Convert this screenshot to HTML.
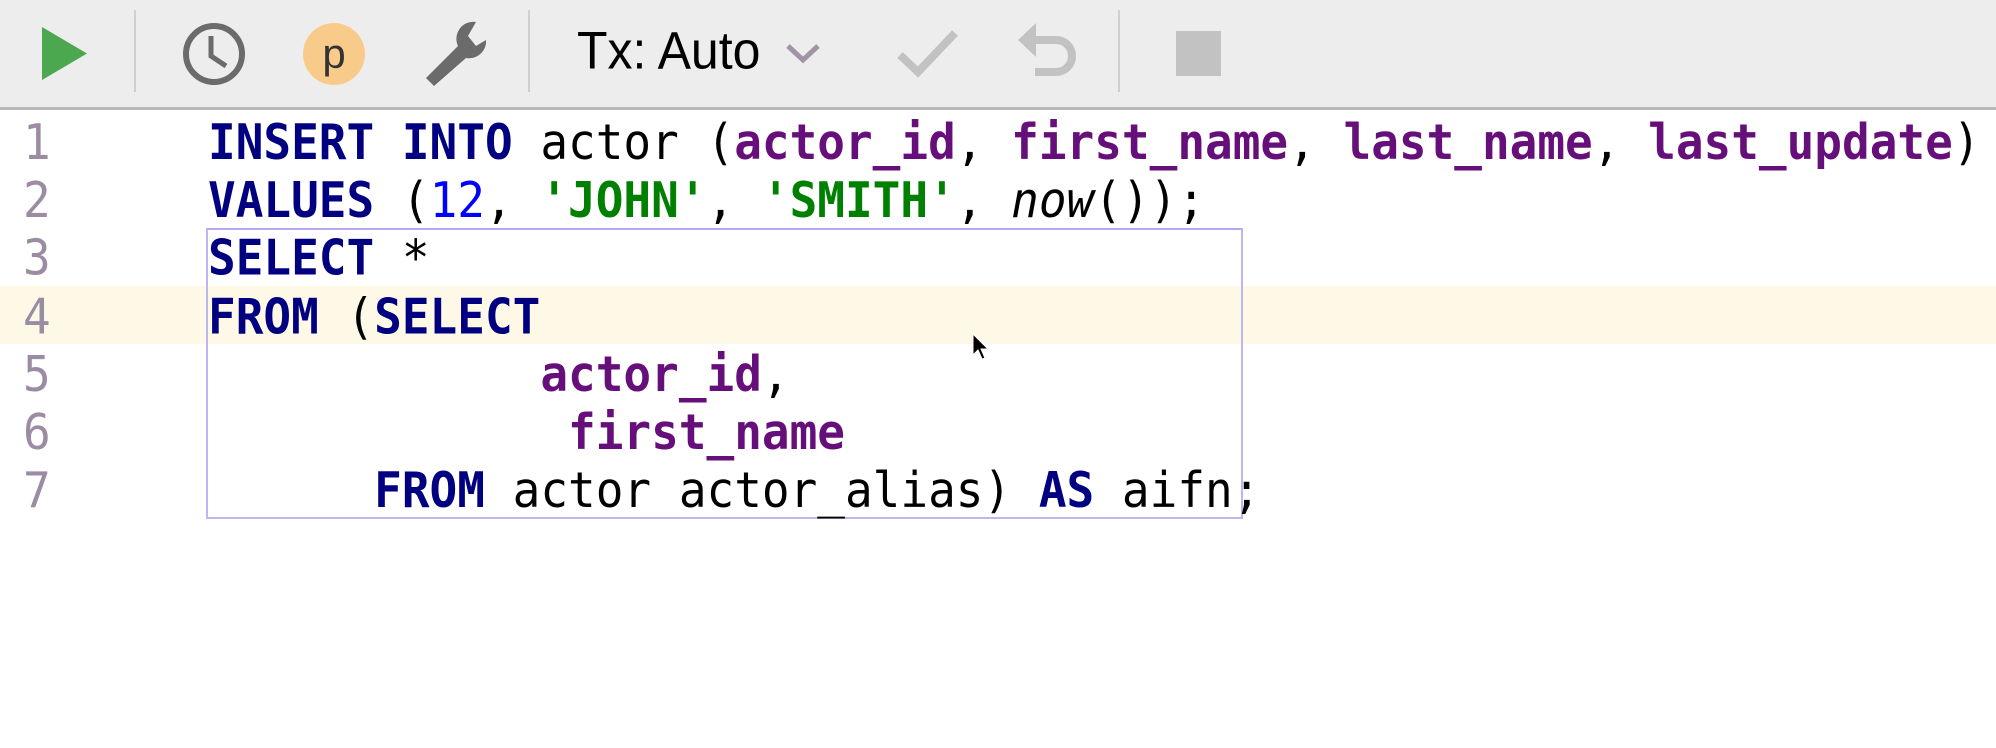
<!DOCTYPE html>
<html><head><meta charset="utf-8"><style>
html,body{margin:0;padding:0;width:1996px;height:748px;overflow:hidden;background:#fff;}
.tb{position:absolute;left:0;top:0;width:1996px;height:107px;background:#ededed;border-bottom:3px solid #b8b8b8;}
.sep{position:absolute;top:10px;width:2px;height:82px;background:#cfcfcf;}
.hl{position:absolute;left:0;top:286px;width:1996px;height:58px;background:#fdf9e6;}
.box{position:absolute;left:206px;top:228px;width:1033px;height:287px;border:2px solid #bdb6f2;border-top-color:#b3aaf2;}
pre{position:absolute;margin:0;top:113px;font-family:"DejaVu Sans Mono",monospace;font-size:46px;line-height:54.2px;white-space:pre;transform:scaleY(1.07);transform-origin:0 0;}
.ln{left:23px;color:#9b8ca3;}
.code{left:208px;color:#000;}
.k{color:#000080;font-weight:bold;}
.i{color:#660e7a;font-weight:bold;}
.n{color:#0000ff;}
.s{color:#008000;font-weight:bold;}
.f{font-style:italic;}
.tx{position:absolute;left:577px;top:20px;font-family:"Liberation Sans",sans-serif;font-size:50px;color:#000;transform:scaleY(1.05);transform-origin:0 0;}
</style></head><body>
<div class="tb">
<svg width="1996" height="107" style="position:absolute;left:0;top:0">
<polygon points="42,27 87,53.5 42,80" fill="#4ba84f"/>
<circle cx="214" cy="54" r="28" fill="none" stroke="#6b6b6b" stroke-width="6"/>
<polyline points="211,36 211,56 226,66" fill="none" stroke="#6b6b6b" stroke-width="5"/>
<circle cx="334" cy="54" r="31" fill="#f9cb8a"/>
<text x="334" y="68" text-anchor="middle" font-family="Liberation Sans,sans-serif" font-size="42" fill="#333">p</text>
<path d="M426,78 L458,46 A17,17 0 0 1 476,22 L468,36 L476,46 L486,40 A17,17 0 0 1 466,58 L434,86 Z" fill="#6b6b6b"/>
<polyline points="788,46 803,60 818,46" fill="none" stroke="#a094a6" stroke-width="5"/>
<polyline points="900,55 918,72 955,33" fill="none" stroke="#c2c2c2" stroke-width="8"/>
<path d="M1034,40 L1056,40 A16,16 0 0 1 1056,72 L1035,72" fill="none" stroke="#c2c2c2" stroke-width="8"/>
<polygon points="1018,40 1036,23 1036,57" fill="#c2c2c2"/>
<rect x="1176" y="31" width="45" height="45" fill="#c2c2c2"/>
</svg>
<div class="sep" style="left:134px"></div>
<div class="sep" style="left:528px"></div>
<div class="sep" style="left:1118px"></div>
<div class="tx">Tx: Auto</div>
</div>
<div class="hl"></div>
<div class="box"></div>
<pre class="ln">1
2
3
4
5
6
7</pre>
<pre class="code"><span class="k">INSERT INTO</span> actor (<span class="i">actor_id</span>, <span class="i">first_name</span>, <span class="i">last_name</span>, <span class="i">last_update</span>)
<span class="k">VALUES</span> (<span class="n">12</span>, <span class="s">'JOHN'</span>, <span class="s">'SMITH'</span>, <span class="f">now</span>());
<span class="k">SELECT</span> *
<span class="k">FROM</span> (<span class="k">SELECT</span>
            <span class="i">actor_id</span>,
             <span class="i">first_name</span>
      <span class="k">FROM</span> actor actor_alias) <span class="k">AS</span> aifn;</pre>
<svg width="20" height="30" style="position:absolute;left:972px;top:333px"><polygon points="1,1 1,22 6,17 10,26 13,25 9,16 16,16" fill="#000" stroke="#fff" stroke-width="1"/></svg>
</body></html>
